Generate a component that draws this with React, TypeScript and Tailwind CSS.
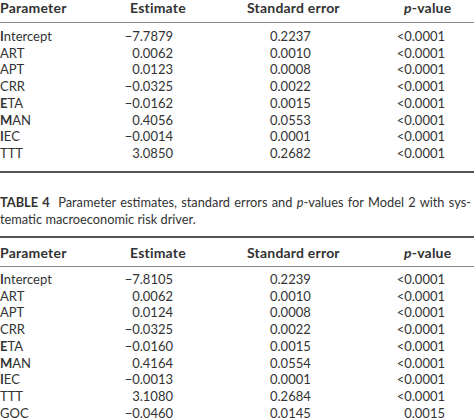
import React from "react";

type Row = { p: React.ReactNode; e: string; s: string; v: string };

const B = ({ c }: { c: string }) => <span className="font-bold">{c}</span>;

const t1: Row[] = [
  { p: <><B c="I" />ntercept</>, e: "\u22127.7879", s: "0.2237", v: "<0.0001" },
  { p: "ART", e: "0.0062", s: "0.0010", v: "<0.0001" },
  { p: "APT", e: "0.0123", s: "0.0008", v: "<0.0001" },
  { p: "CRR", e: "\u22120.0325", s: "0.0022", v: "<0.0001" },
  { p: <><B c="E" />TA</>, e: "\u22120.0162", s: "0.0015", v: "<0.0001" },
  { p: <><B c="M" />AN</>, e: "0.4056", s: "0.0553", v: "<0.0001" },
  { p: <><B c="I" />EC</>, e: "\u22120.0014", s: "0.0001", v: "<0.0001" },
  { p: "TTT", e: "3.0850", s: "0.2682", v: "<0.0001" },
];

const t2: Row[] = [
  { p: <><B c="I" />ntercept</>, e: "\u22127.8105", s: "0.2239", v: "<0.0001" },
  { p: "ART", e: "0.0062", s: "0.0010", v: "<0.0001" },
  { p: "APT", e: "0.0124", s: "0.0008", v: "<0.0001" },
  { p: "CRR", e: "\u22120.0325", s: "0.0022", v: "<0.0001" },
  { p: <><B c="E" />TA</>, e: "\u22120.0160", s: "0.0015", v: "<0.0001" },
  { p: <><B c="M" />AN</>, e: "0.4164", s: "0.0554", v: "<0.0001" },
  { p: <><B c="I" />EC</>, e: "\u22120.0013", s: "0.0001", v: "<0.0001" },
  { p: "TTT", e: "3.1080", s: "0.2684", v: "<0.0001" },
  { p: "GOC", e: "\u22120.0460", s: "0.0145", v: "0.0015" },
];

function Header() {
  return (
    <div className="flex h-[15px] items-center font-bold text-[14px] tracking-[0.2px]">
      <div className="w-[130px]">Parameter</div>
      <div className="w-[117px]">Estimate</div>
      <div className="w-[157px]">Standard error</div>
      <div>
        <span className="italic">p</span>-value
      </div>
    </div>
  );
}

function Body({ rows }: { rows: Row[] }) {
  return (
    <div className="flex flex-col">
      {rows.map((r, i) => (
        <div key={i} className="flex h-[16.75px] items-center">
          <div className="w-[100px]">{r.p}</div>
          <div className="w-[73px] text-right">{r.e}</div>
          <div className="w-[97px]" />
          <div className="w-[100px]">{r.s}</div>
          <div className="w-[75px] text-right">{r.v}</div>
        </div>
      ))}
    </div>
  );
}

export default function App() {
  return (
    <div
      className="w-[474px] h-[419px] overflow-hidden bg-white text-[#333] text-[13px] leading-none"
      style={{ fontFamily: '"Lato", "Open Sans", sans-serif' }}
    >
      <div>
        <Header />
        <div className="mt-[7px] h-px bg-[#888]" />
        <div className="mt-[5px]">
          <Body rows={t1} />
        </div>
        <div className="mt-[9px] h-[2px] bg-[#555]" />
      </div>
      <div className="mt-[21px] w-[471px] text-[12.8px] leading-[17px]">
        <div className="text-justify [text-align-last:justify]">
          <span className="font-bold">TABLE 4</span>&nbsp; Parameter estimates, standard errors and{" "}
          <span className="italic">p</span>-values for Model 2 with sys-
        </div>
        <div>tematic macroeconomic risk driver.</div>
      </div>
      <div className="mt-[8px] h-[2px] bg-[#555]" />
      <div className="mt-[7px]">
        <Header />
      </div>
      <div className="mt-[6px] h-px bg-[#888]" />
      <div className="mt-[4px]">
        <Body rows={t2} />
      </div>
    </div>
  );
}
